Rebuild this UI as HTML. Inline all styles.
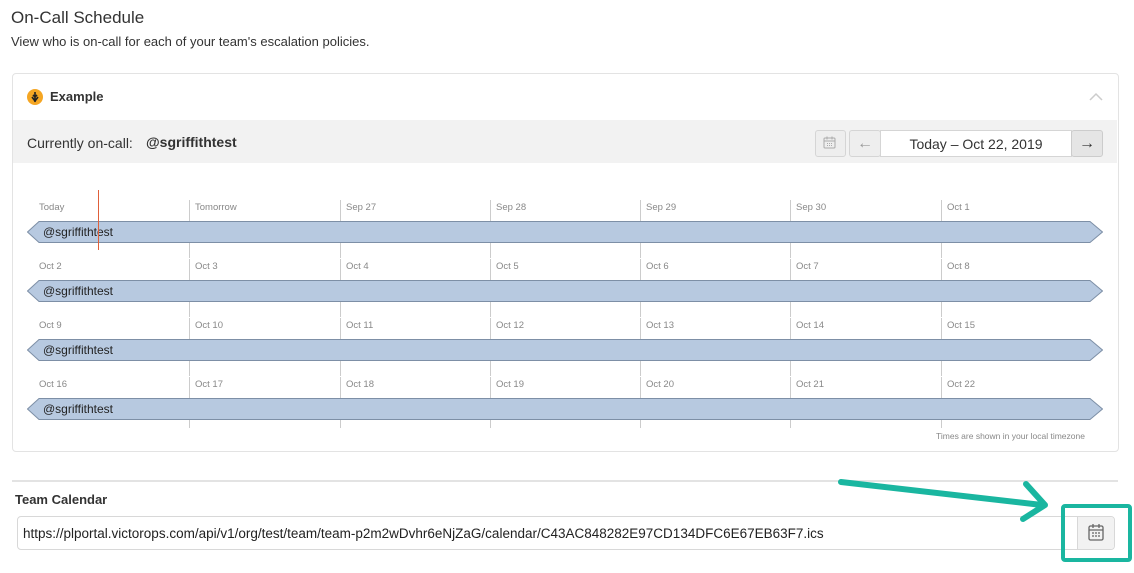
<!DOCTYPE html><html><head><style>
body{margin:0;width:1134px;height:573px;background:#fff;font-family:"Liberation Sans",sans-serif;position:relative;overflow:hidden;color:#333}
.a{position:absolute}
.lbl{position:absolute;font-size:9.5px;color:#888}
.tk{position:absolute;width:1px;background:#ccc}
.bar{position:absolute;left:27px;width:1076px;height:22px}
.bar span{position:absolute;left:16px;top:4px;font-size:12px;color:#222}
</style></head><body>
<div class="a" style="left:11px;top:8px;font-size:17px;color:#333">On-Call Schedule</div>
<div class="a" style="left:11px;top:34px;font-size:13px;color:#333">View who is on-call for each of your team's escalation policies.</div>
<div class="a" style="left:12px;top:73px;width:1105px;height:377px;border:1px solid #e3e3e3;border-radius:4px"></div>
<div class="a" style="left:27px;top:89px;width:16px;height:16px;border-radius:50%;background:#f5a623"></div>
<svg class="a" style="left:27px;top:89px" width="16" height="16"><path d="M8 3v10M5 8l3 4 3-4M6 6l2 2 2-2" stroke="#222" stroke-width="1.6" fill="none"/></svg>
<div class="a" style="left:50px;top:89px;font-size:13px;font-weight:bold;color:#333">Example</div>
<svg class="a" style="left:1089px;top:92px" width="14" height="10"><path d="M1 8l6-6 6 6" stroke="#ccc" stroke-width="1.5" fill="none"/></svg>
<div class="a" style="left:13px;top:120px;width:1104px;height:43px;background:#f2f2f2"></div>
<div class="a" style="left:27px;top:135px;font-size:14px;color:#333">Currently on-call:</div>
<div class="a" style="left:146px;top:134px;font-size:14px;font-weight:bold;color:#333">@sgriffithtest</div>
<div class="a" style="left:815px;top:130px;width:29px;height:25px;border:1px solid #d5d5d5;border-radius:3px;background:#eee"></div>
<svg class="a" style="left:822px;top:135px" width="15" height="15"><rect x="2" y="3" width="11" height="10" rx="1" stroke="#aaa" fill="none"/><path d="M2 6h11M5 1.5v3M10 1.5v3" stroke="#aaa"/><path d="M5 8.5h5M5 10.5h5" stroke="#aaa" stroke-dasharray="1 1"/></svg>
<div class="a" style="left:849px;top:130px;width:30px;height:25px;border:1px solid #d5d5d5;border-radius:3px;background:#eee;color:#999;font-size:16px;text-align:center;line-height:25px">←</div>
<div class="a" style="left:880px;top:130px;width:190px;height:25px;border:1px solid #d5d5d5;background:#fff;font-size:14px;text-align:center;line-height:26px;color:#333">Today – Oct 22, 2019</div>
<div class="a" style="left:1071px;top:130px;width:30px;height:25px;border:1px solid #ccc;border-radius:3px;background:#e5e5e5;color:#333;font-size:16px;text-align:center;line-height:25px">→</div>
<div id="tl"></div>
<div class="a" style="left:98px;top:190px;width:1px;height:60px;background:#e0603a;z-index:5"></div>
<div class="a" style="left:936px;top:431px;font-size:8.5px;color:#888">Times are shown in your local timezone</div>
<div class="a" style="left:12px;top:480px;width:1106px;height:2px;background:#e3e3e3"></div>
<div class="a" style="left:15px;top:492px;font-size:13px;font-weight:bold;color:#333">Team Calendar</div>
<div class="a" style="left:17px;top:516px;width:1096px;height:32px;border:1px solid #d8d8d8;border-radius:4px"></div>
<div class="a" style="left:23px;top:526px;font-size:13.5px;color:#222">https://plportal.victorops.com/api/v1/org/test/team/team-p2m2wDvhr6eNjZaG/calendar/C43AC848282E97CD134DFC6E67EB63F7.ics</div>
<div class="a" style="left:1077px;top:517px;width:36px;height:32px;background:#f2f2f2;border-left:1px solid #d8d8d8;border-radius:0 4px 4px 0"></div>
<svg class="a" style="left:1087px;top:523px" width="18" height="19"><rect x="2" y="3" width="14" height="14" rx="1.5" stroke="#666" fill="none" stroke-width="1.3"/><path d="M2 7h14M6 1v4M12 1v4" stroke="#666" stroke-width="1.3"/><path d="M5 10h2M8 10h2M11 10h2M5 13h2M8 13h2M11 13h2" stroke="#666" stroke-width="1.3"/></svg>
<div class="a" style="left:1061px;top:504px;width:63px;height:50px;border:4px solid #1ab6a0;border-radius:4px"></div>
<svg class="a" style="left:0;top:0" width="1134" height="573"><path d="M841 482L1042 505M1026 484L1045 505L1023 519" stroke="#1ab6a0" stroke-width="6" fill="none" stroke-linecap="round" stroke-linejoin="round"/></svg>
<script>
var labels=[["Today","Tomorrow","Sep 27","Sep 28","Sep 29","Sep 30","Oct 1"],["Oct 2","Oct 3","Oct 4","Oct 5","Oct 6","Oct 7","Oct 8"],["Oct 9","Oct 10","Oct 11","Oct 12","Oct 13","Oct 14","Oct 15"],["Oct 16","Oct 17","Oct 18","Oct 19","Oct 20","Oct 21","Oct 22"]];
var xs=[33,189,340,490,640,790,941],h="";
for(var r=0;r<4;r++){var y=200+r*59;
for(var c=0;c<7;c++){h+='<div class="lbl" style="left:'+(xs[c]+6)+'px;top:'+(y+2)+'px">'+labels[r][c]+'</div>';
if(c>0)h+='<div class="tk" style="left:'+xs[c]+'px;top:'+y+'px;height:'+(r==3?51:58)+'px"></div>';}
h+='<div class="bar" style="top:'+(y+21)+'px"><svg width="1076" height="22" style="position:absolute;left:0;top:0"><path d="M0.5 11L12 0.5H1063L1075.5 11L1063 21.5H12Z" fill="#b7c9e0" stroke="#7d8fa6"/></svg><span>@sgriffithtest</span></div>';}
document.getElementById('tl').innerHTML=h;
</script>
</body></html>
